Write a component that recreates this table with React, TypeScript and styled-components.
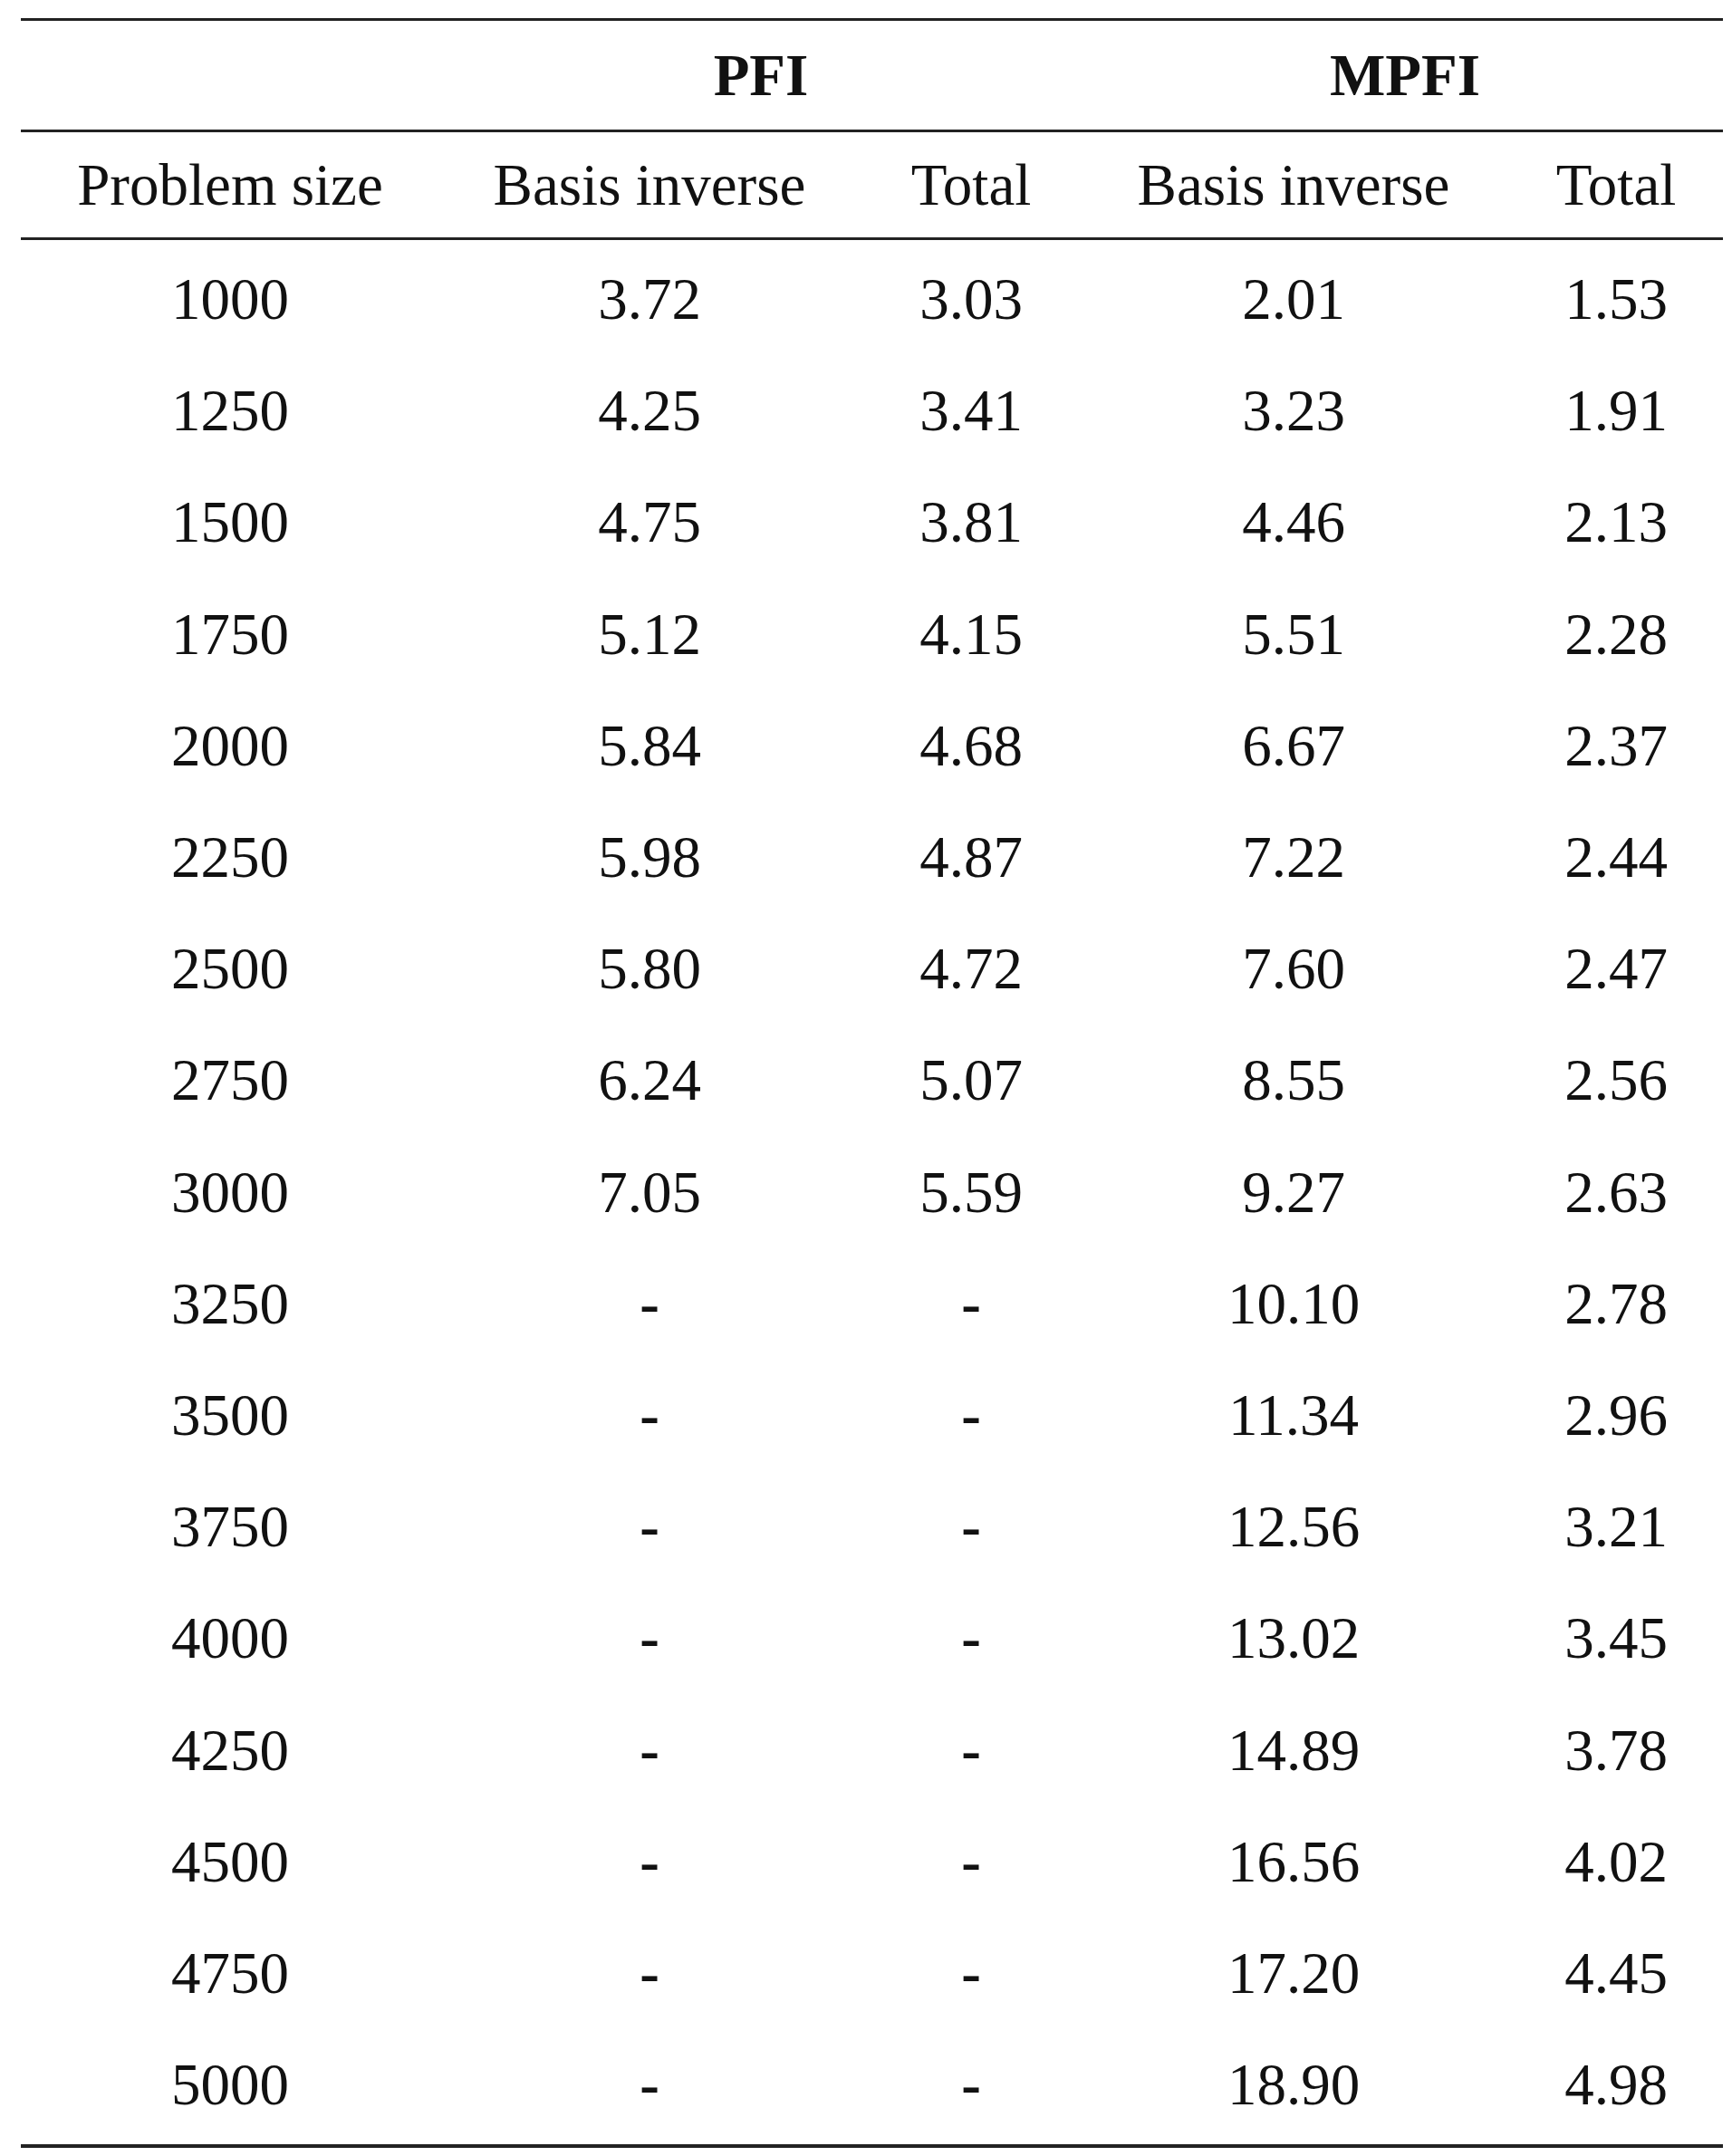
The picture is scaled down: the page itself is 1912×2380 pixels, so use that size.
import styled, { createGlobalStyle } from "styled-components"

type Row = {
    size: number
    pfiBasis?: string
    pfiTotal?: string
    mpfiBasis: string
    mpfiTotal: string
}

const rows: Row[] = [
    { size: 1000, pfiBasis: "3.72", pfiTotal: "3.03", mpfiBasis: "2.01", mpfiTotal: "1.53" },
    { size: 1250, pfiBasis: "4.25", pfiTotal: "3.41", mpfiBasis: "3.23", mpfiTotal: "1.91" },
    { size: 1500, pfiBasis: "4.75", pfiTotal: "3.81", mpfiBasis: "4.46", mpfiTotal: "2.13" },
    { size: 1750, pfiBasis: "5.12", pfiTotal: "4.15", mpfiBasis: "5.51", mpfiTotal: "2.28" },
    { size: 2000, pfiBasis: "5.84", pfiTotal: "4.68", mpfiBasis: "6.67", mpfiTotal: "2.37" },
    { size: 2250, pfiBasis: "5.98", pfiTotal: "4.87", mpfiBasis: "7.22", mpfiTotal: "2.44" },
    { size: 2500, pfiBasis: "5.80", pfiTotal: "4.72", mpfiBasis: "7.60", mpfiTotal: "2.47" },
    { size: 2750, pfiBasis: "6.24", pfiTotal: "5.07", mpfiBasis: "8.55", mpfiTotal: "2.56" },
    { size: 3000, pfiBasis: "7.05", pfiTotal: "5.59", mpfiBasis: "9.27", mpfiTotal: "2.63" },
    { size: 3250, mpfiBasis: "10.10", mpfiTotal: "2.78" },
    { size: 3500, mpfiBasis: "11.34", mpfiTotal: "2.96" },
    { size: 3750, mpfiBasis: "12.56", mpfiTotal: "3.21" },
    { size: 4000, mpfiBasis: "13.02", mpfiTotal: "3.45" },
    { size: 4250, mpfiBasis: "14.89", mpfiTotal: "3.78" },
    { size: 4500, mpfiBasis: "16.56", mpfiTotal: "4.02" },
    { size: 4750, mpfiBasis: "17.20", mpfiTotal: "4.45" },
    { size: 5000, mpfiBasis: "18.90", mpfiTotal: "4.98" },
]

// PFI has no timing past 3000, shown as a dash
const Value: React.FC<{ value?: string }> = ({ value }) =>
    value ? <Cell>{value}</Cell> : <Cell><Dash>-</Dash></Cell>

const App: React.FC = () => {
    return (
        <>
            <GlobalStyle />
            <Page>
                <Table>
                    <GroupRow>
                        <Cell />
                        <GroupCell>PFI</GroupCell>
                        <GroupCell>MPFI</GroupCell>
                    </GroupRow>
                    <HeaderRow>
                        <Cell>Problem size</Cell>
                        <Cell>Basis inverse</Cell>
                        <Cell>Total</Cell>
                        <Cell>Basis inverse</Cell>
                        <Cell>Total</Cell>
                    </HeaderRow>
                    <Body>
                        {rows.map(row => (
                            <DataRow key={row.size}>
                                <Cell>{row.size}</Cell>
                                <Value value={row.pfiBasis} />
                                <Value value={row.pfiTotal} />
                                <Value value={row.mpfiBasis} />
                                <Value value={row.mpfiTotal} />
                            </DataRow>
                        ))}
                    </Body>
                </Table>
            </Page>
        </>
    )
}

export default App

const GlobalStyle = createGlobalStyle`
 html, body {
    margin: 0;
    padding: 0;
    background: #ffffff;
 }
`

const Page = styled.div`
 padding: 20px 10px 0 23px;
 font-family: "Liberation Serif", "Times New Roman", serif;
 font-size: 65px;
 color: #111111;
`

const Table = styled.div`
 width: 1879px;
 border-top: 3px solid #222222;
 border-bottom: 4px solid #222222;
`

const columns = `462px 464px 246px 466px 246px`

const GroupRow = styled.div`
 display: grid;
 grid-template-columns: 462px 710px 712px;
 height: 120px;
 border-bottom: 3px solid #222222;
`

const HeaderRow = styled.div`
 display: grid;
 grid-template-columns: ${columns};
 height: 116px;
 border-bottom: 3px solid #222222;
`

const Body = styled.div`
 padding: 4px 0;
`

const DataRow = styled.div`
 display: grid;
 grid-template-columns: ${columns};
 height: 123.2px;
`

const Cell = styled.div`
 display: flex;
 align-items: center;
 justify-content: center;
 white-space: nowrap;
`

const GroupCell = styled(Cell)`
 font-weight: bold;
`

const Dash = styled.span`
 font-weight: bold;
`
